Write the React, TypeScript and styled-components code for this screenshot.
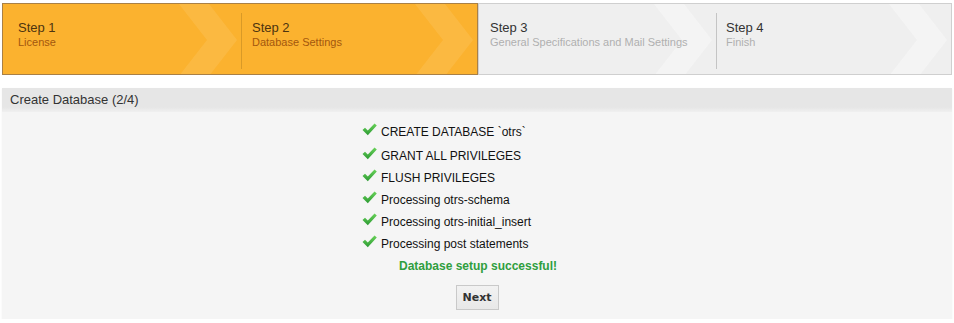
import React from "react";
import styled, { createGlobalStyle, css } from "styled-components";

const Global = createGlobalStyle`
  html, body { margin: 0; padding: 0; background: #ffffff; }
  body { font-family: "Liberation Sans", Arial, sans-serif; }
`;

const Page = styled.div`
  width: 950px;
  padding: 3px 0 0 2px;
`;

const Steps = styled.div`
  display: flex;
  height: 72px;
`;

const Step = styled.div<{ $on: boolean; $w: number; $pad: number; $first?: boolean; $groupEnd?: boolean }>`
  position: relative;
  width: ${(p) => p.$w}px;
  flex: none;
  box-sizing: border-box;
  padding: 16px 0 0 ${(p) => p.$pad}px;
  overflow: hidden;
  border-top: 1px solid;
  border-bottom: 1px solid;
  ${(p) =>
    p.$on
      ? css`
          background: #fbb22f;
          border-color: #a98046;
        `
      : css`
          background: #efefef;
          border-color: #cfcfcf;
        `}
  ${(p) => p.$first && css`border-left: 1px solid ${p.$on ? "#a98046" : "#cfcfcf"};`}
  ${(p) => p.$groupEnd && css`border-right: 1px solid ${p.$on ? "#a98046" : "#cfcfcf"};`}
`;

const Divider = styled.div<{ $on: boolean }>`
  position: absolute;
  left: 0;
  top: 9px;
  bottom: 5px;
  width: 1px;
  background: ${(p) => (p.$on ? "#d99a27" : "#c4c4c4")};
`;

const Chevron = styled.svg`
  position: absolute;
  right: 0;
  top: 0;
  width: 64px;
  height: 72px;
`;

const StepTitle = styled.div<{ $on: boolean }>`
  position: relative;
  font-size: 13px;
  line-height: 16px;
  color: ${(p) => (p.$on ? "#4d3410" : "#333333")};
`;

const StepSub = styled.div<{ $on: boolean }>`
  position: relative;
  font-size: 11px;
  line-height: 13px;
  color: ${(p) => (p.$on ? "#a3570e" : "#b0b0b0")};
`;

const Panel = styled.div`
  margin-top: 13px;
  background: #f5f5f5;
  box-shadow: 0 1px 2px rgba(0, 0, 0, 0.06);
`;

const PanelHeader = styled.div`
  height: 24px;
  line-height: 24px;
  padding-left: 8px;
  font-size: 13px;
  color: #333;
  background: linear-gradient(#e6e6e6, #e6e6e6 80%, #f0f0f0);
`;

const PanelBody = styled.div`
  padding: 9px 0 9px;
  display: flex;
  flex-direction: column;
  align-items: center;
`;

const List = styled.ul`
  list-style: none;
  margin: 0;
  padding: 0;
  width: 230px;
  margin-left: 0px;
`;

const Item = styled.li<{ $first?: boolean }>`
  display: flex;
  align-items: center;
  gap: 4px;
  height: 22px;
  font-size: 12px;
  color: #111;
  margin-bottom: ${(p) => (p.$first ? "2px" : "0")};
`;

const Check = styled.svg`
  width: 15px;
  height: 13px;
  margin-top: -5px;
  flex: none;
`;

const Success = styled.div`
  height: 22px;
  line-height: 22px;
  font-size: 12px;
  font-weight: bold;
  color: #2f9e3e;
  margin-left: 2px;
`;

const Button = styled.button`
  margin-top: 8px;
  height: 25px;
  width: 43px;
  padding: 0;
  box-sizing: border-box;
  border: 1px solid #c9c9c9;
  background: linear-gradient(#f2f2f2, #e8e8e8);
  font-family: "DejaVu Sans", Verdana, sans-serif;
  font-size: 11px;
  font-weight: bold;
  color: #333;
`;

const steps = [
  { title: "Step 1", sub: "License", on: true, w: 239, pad: 15 },
  { title: "Step 2", sub: "Database Settings", on: true, w: 237, pad: 11 },
  { title: "Step 3", sub: "General Specifications and Mail Settings", on: false, w: 238, pad: 11 },
  { title: "Step 4", sub: "Finish", on: false, w: 236, pad: 10 },
];

const items = [
  "CREATE DATABASE `otrs`",
  "GRANT ALL PRIVILEGES",
  "FLUSH PRIVILEGES",
  "Processing otrs-schema",
  "Processing otrs-initial_insert",
  "Processing post statements",
];

function CheckIcon() {
  return (
    <Check viewBox="0 0 15 13">
      <defs>
        <linearGradient id="cg" x1="0" y1="0" x2="0" y2="1">
          <stop offset="0" stopColor="#6ad35a" />
          <stop offset="1" stopColor="#2c9a33" />
        </linearGradient>
      </defs>
      <path d="M0.5 7 L3 4.8 L5.8 7.6 L12.5 0.5 L14.8 2.6 L5.8 12.3 Z" fill="url(#cg)" />
    </Check>
  );
}

export default function App() {
  return (
    <>
      <Global />
      <Page>
        <Steps>
          {steps.map((s, i) => (
            <Step
              key={s.title}
              $on={s.on}
              $w={s.w}
              $pad={s.pad}
              $first={i === 0 || i === 2}
              $groupEnd={i === 1 || i === 3}
            >
              <Chevron viewBox="0 0 64 72" preserveAspectRatio="none">
                <polygon
                  points="2,0 32,0 60,36 32,72 2,72 30,36"
                  fill={s.on ? "rgba(255,255,255,0.09)" : "rgba(255,255,255,0.35)"}
                />
              </Chevron>
              {(i === 1 || i === 3) && <Divider $on={s.on} />}
              <StepTitle $on={s.on}>{s.title}</StepTitle>
              <StepSub $on={s.on}>{s.sub}</StepSub>
            </Step>
          ))}
        </Steps>
        <Panel>
          <PanelHeader>Create Database (2/4)</PanelHeader>
          <PanelBody>
            <List>
              {items.map((t, i) => (
                <Item key={t} $first={i === 0}>
                  <CheckIcon />
                  <span>{t}</span>
                </Item>
              ))}
            </List>
            <Success>Database setup successful!</Success>
            <Button>Next</Button>
          </PanelBody>
        </Panel>
      </Page>
    </>
  );
}
